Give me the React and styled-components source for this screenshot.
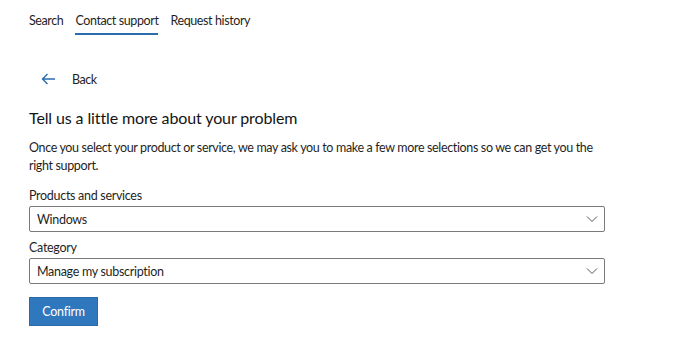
import styled, { createGlobalStyle } from "styled-components";

const GlobalStyle = createGlobalStyle`
  body {
    margin: 0;
    background: #ffffff;
    font-family: "Lato", "Open Sans", sans-serif;
    color: #1f1f1f;
  }
`;

const Page = styled.div`
  width: 681px;
  height: 343px;
  overflow: hidden;
  padding: 0 29px;
  box-sizing: border-box;
`;

const Tabs = styled.nav`
  display: flex;
  gap: 12px;
  padding-top: 12px;
`;

const Tab = styled.div`
  font-size: 12.5px;
  letter-spacing: -0.4px;
  line-height: 18px;
  padding-bottom: 3px;
  color: #1f1f1f;
  border-bottom: 2px solid ${(p) => (p.$active ? "#2b6cb0" : "transparent")};
`;

const BackRow = styled.div`
  display: flex;
  align-items: center;
  gap: 16px;
  margin-top: 34px;
  padding-left: 12px;
  font-size: 12.5px;
  letter-spacing: -0.5px;
  color: #1f1f1f;
  height: 20px;
`;

const Heading = styled.h1`
  margin: 18px 0 0;
  font-size: 16px;
  letter-spacing: -0.12px;
  font-weight: 400;
  line-height: 22px;
  color: #141414;
`;

const Intro = styled.p`
  margin: 10px 0 0;
  font-size: 12.5px;
  letter-spacing: -0.35px;
  line-height: 18px;
  width: 572px;
  color: #1f1f1f;
`;

const Label = styled.div`
  font-size: 12.5px;
  letter-spacing: -0.3px;
  line-height: 18px;
  color: #1f1f1f;
  margin-top: ${(p) => p.$top}px;
`;

const Select = styled.div`
  display: flex;
  align-items: center;
  justify-content: space-between;
  width: 576px;
  height: 26px;
  margin-top: 1px;
  box-sizing: border-box;
  border: 1px solid #7a7a7a;
  border-radius: 2px;
  padding: 0 6px 0 7px;
  font-size: 12.5px;
  letter-spacing: -0.3px;
  color: #1f1f1f;
`;

const Button = styled.button`
  margin-top: 13px;
  width: 69px;
  height: 29px;
  border: 1px solid #2a6aa8;
  background: #3078bd;
  color: #ffffff;
  font-family: inherit;
  font-size: 12.5px;
  letter-spacing: -0.3px;
  padding: 0;
`;

const Chevron = () => (
  <svg width="12" height="8" viewBox="0 0 12 8">
    <path d="M1 1.5 L6 6.5 L11 1.5" fill="none" stroke="#555" strokeWidth="1" />
  </svg>
);

const Arrow = () => (
  <svg width="15" height="12" viewBox="0 0 15 12">
    <path
      d="M14 6 H1.5 M6.5 1 L1.5 6 L6.5 11"
      fill="none"
      stroke="#2b6cb0"
      strokeWidth="1.4"
    />
  </svg>
);

export default function App() {
  return (
    <Page>
      <GlobalStyle />
      <Tabs>
        <Tab>Search</Tab>
        <Tab $active>Contact support</Tab>
        <Tab>Request history</Tab>
      </Tabs>
      <BackRow>
        <Arrow />
        <span>Back</span>
      </BackRow>
      <Heading>Tell us a little more about your problem</Heading>
      <Intro>
        Once you select your product or service, we may ask you to make a few
        more selections so we can get you the right support.
      </Intro>
      <Label $top={12}>Products and services</Label>
      <Select>
        <span>Windows</span>
        <Chevron />
      </Select>
      <Label $top={7}>Category</Label>
      <Select>
        <span>Manage my subscription</span>
        <Chevron />
      </Select>
      <Button>Confirm</Button>
    </Page>
  );
}
